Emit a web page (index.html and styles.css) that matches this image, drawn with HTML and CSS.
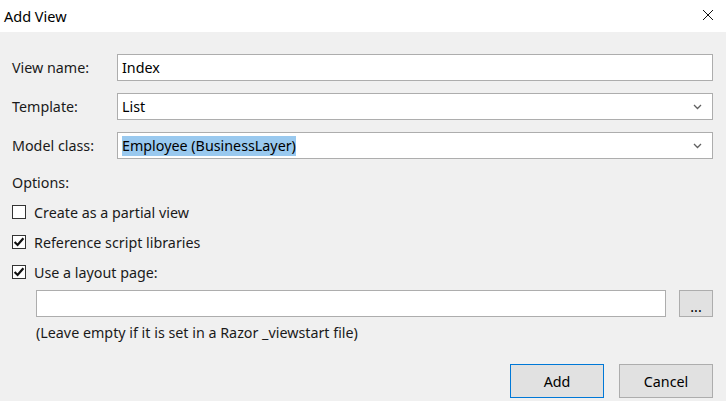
FILE: index.html
```html
<!DOCTYPE html>
<html>
<head>
<meta charset="utf-8">
<link rel="stylesheet" href="styles.css">
</head>
<body>
<div class="dialog">
  <div class="titlebar">
    <span class="title">Add View</span>
    <svg class="close" width="12" height="12" viewBox="0 0 12 12"><path d="M1 1L11 11M11 1L1 11" stroke="#111" stroke-width="1" fill="none"/></svg>
  </div>
  <div class="content">
    <div class="form">
      <label class="lbl">View name:</label>
      <div class="field">Index</div>
      <label class="lbl">Template:</label>
      <div class="field select">List<svg class="chev" width="9" height="6" viewBox="0 0 9 6"><path d="M1 1L4.5 4.5L8 1" stroke="#606060" stroke-width="1.3" fill="none"/></svg></div>
      <label class="lbl">Model class:</label>
      <div class="field select"><span class="sel">Employee (BusinessLayer)</span><svg class="chev" width="9" height="6" viewBox="0 0 9 6"><path d="M1 1L4.5 4.5L8 1" stroke="#606060" stroke-width="1.3" fill="none"/></svg></div>
    </div>
    <div class="options">Options:</div>
    <div class="checks">
      <div class="check"><span class="box"></span><span>Create as a partial view</span></div>
      <div class="check"><span class="box"><svg width="12" height="12" viewBox="0 0 12 12"><path d="M1.6 6L4.6 9L10.4 2.2" stroke="#111" stroke-width="2.2" fill="none"/></svg></span><span>Reference script libraries</span></div>
      <div class="check"><span class="box"><svg width="12" height="12" viewBox="0 0 12 12"><path d="M1.6 6L4.6 9L10.4 2.2" stroke="#111" stroke-width="2.2" fill="none"/></svg></span><span>Use a layout page:</span></div>
    </div>
    <div class="layout-row">
      <div class="field grow"></div>
      <button class="btn dots">...</button>
    </div>
    <div class="hint">(Leave empty if it is set in a Razor _viewstart file)</div>
    <div class="actions">
      <button class="btn primary">Add</button>
      <button class="btn">Cancel</button>
    </div>
  </div>
</div>
</body>
</html>
```
FILE: styles.css
```css
html, body {
  margin: 0;
  padding: 0;
}
body {
  width: 726px;
  height: 401px;
  overflow: hidden;
  background: #f0f0f0;
  font-family: "Noto Sans", "Open Sans", sans-serif;
  font-size: 14.3px;
  color: #1a1a1a;
}
.dialog {
  width: 726px;
  height: 401px;
}
.titlebar {
  height: 32px;
  background: #ffffff;
  display: flex;
  align-items: center;
  justify-content: space-between;
  padding: 0 12px 0 4px;
}
.title {
  font-size: 14.5px;
  color: #000;
}
.close {
  margin-top: -2px;
}
.content {
  padding: 22px 13px 0 12px;
}
.form {
  display: grid;
  grid-template-columns: 105px 1fr;
  grid-auto-rows: 27px;
  row-gap: 12px;
}
.lbl {
  display: flex;
  align-items: center;
}
.field {
  box-sizing: border-box;
  height: 27px;
  background: #fff;
  border: 1px solid #adadad;
  display: flex;
  align-items: center;
  padding-left: 4px;
  color: #000;
}
.select {
  justify-content: space-between;
  padding-right: 10px;
}
.sel {
  background: #99c9ef;
  line-height: 20px;
}
.options {
  margin-top: 14px;
  line-height: 20px;
}
.checks {
  margin-top: 4px;
}
.check {
  height: 30px;
  display: flex;
  align-items: center;
  gap: 8px;
}
.box {
  box-sizing: border-box;
  width: 14px;
  height: 14px;
  border: 1px solid #333;
  background: #fff;
  display: flex;
  align-items: center;
  justify-content: center;
}
.layout-row {
  margin-top: 3px;
  margin-left: 24px;
  display: flex;
  gap: 13px;
}
.grow {
  flex: 1;
}
.btn {
  box-sizing: border-box;
  font-family: inherit;
  font-size: 14.3px;
  color: #000;
  background: #e1e1e1;
  border: 1px solid #adadad;
  padding: 0;
  margin: 0;
}
.dots {
  width: 34px;
  height: 27px;
  line-height: 27px;
  padding-top: 2px;
}
.hint {
  margin-top: 6px;
  margin-left: 24px;
  line-height: 20px;
}
.actions {
  margin-top: 21px;
  display: flex;
  justify-content: flex-end;
  gap: 15px;
}
.actions .btn {
  width: 94px;
  height: 34px;
}
.primary {
  border-color: #0078d7;
}
```
